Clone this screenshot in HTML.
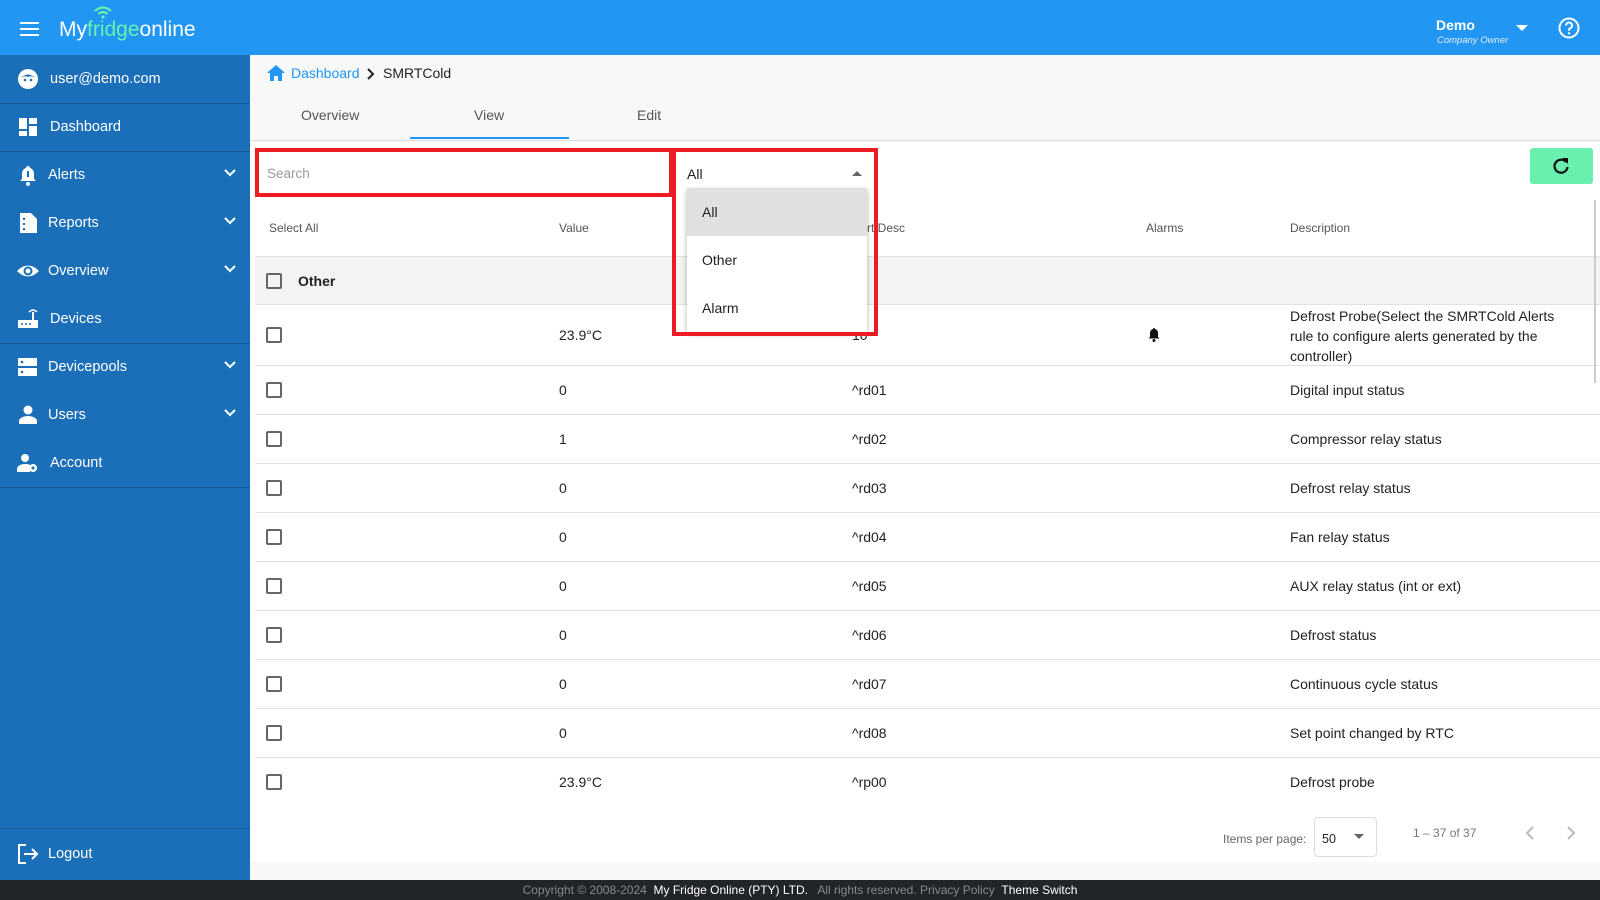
<!DOCTYPE html>
<html><head><meta charset="utf-8"><style>
*{box-sizing:border-box;margin:0;padding:0}
body{width:1600px;height:900px;overflow:hidden;font-family:"Liberation Sans",sans-serif;background:#f8f8f8;position:relative;color:#222}
.abs{position:absolute}
#top{left:0;top:0;width:1600px;height:55px;background:#2196f3;color:#fff}
#side{left:0;top:55px;width:250px;height:825px;background:#1a6fb8;color:#fff}
.si{position:absolute;left:0;width:250px;height:48px;font-size:14.5px;display:flex;align-items:center}
.si .ic{position:absolute;left:17px;top:13px;width:22px;height:22px}
.si .tx{position:absolute;left:48px}
.si .ch{position:absolute;left:224px;top:18px}
.line{position:absolute;left:0;width:250px;height:1px;background:#155e9e}
#foot{left:0;top:880px;width:1600px;height:20px;background:#212529;color:#888;font-size:12px;text-align:center;line-height:20px}
#foot b{color:#fff;font-weight:normal}
.card{left:250px;top:142px;width:1350px;height:720px;background:#fff}
.hd{font-size:12px;color:#555;top:221px}
.row{position:absolute;left:255px;width:1345px;border-bottom:1px solid #e2e2e2}
.cb{position:absolute;left:11px;width:16px;height:16px;border:2px solid #666;border-radius:2px}
.cell{position:absolute;font-size:14px;color:#222}
.dd{z-index:10}
</style></head><body>
<div id="top" class="abs">
 <svg class="abs" style="left:20px;top:22px" width="20" height="14"><rect y="0" width="19" height="2" fill="#fff"/><rect y="6" width="19" height="2" fill="#fff"/><rect y="12" width="19" height="2" fill="#fff"/></svg>
 <div class="abs" style="left:59px;top:18px;font-size:21px;color:#fff">My<span style="color:#69f0ae">fridge</span>online</div>
 <svg class="abs" style="left:92px;top:5px" width="22" height="14" viewBox="0 0 22 14"><path d="M3 6 Q11 -1 19 6" stroke="#69f0ae" stroke-width="2.2" fill="none"/><path d="M6.5 9 Q11 5 15.5 9" stroke="#69f0ae" stroke-width="2.2" fill="none"/><circle cx="11" cy="12" r="1.6" fill="#69f0ae"/></svg>
 <div class="abs" style="left:1436px;top:17px;font-size:14px;font-weight:bold">Demo</div>
 <div class="abs" style="left:1437px;top:35px;font-size:9.5px;font-style:italic;color:#e3f0fd">Company Owner</div>
 <svg class="abs" style="left:1516px;top:25px" width="12" height="7"><path d="M0 0H12L6 6Z" fill="#fff"/></svg>
 <svg class="abs" style="left:1558px;top:17px" width="22" height="22" viewBox="0 0 22 22"><circle cx="11" cy="11" r="9.5" stroke="#fff" stroke-width="2" fill="none"/><path d="M8 8.5a3 3 0 1 1 4.2 2.7c-.9.5-1.2 1-1.2 2v.6" stroke="#fff" stroke-width="2" fill="none"/><circle cx="11" cy="16.3" r="1.2" fill="#fff"/></svg>
</div>
<div id="side" class="abs">
 <div class="si" style="top:0"><svg class="ic" viewBox="0 0 22 22"><circle cx="11" cy="11" r="10" fill="#fff"/><path d="M4 10 Q11 3 18 10 Q14 7 11 9 Q8 7 4 10Z" fill="#1a6fb8"/><circle cx="8" cy="12" r="1.3" fill="#1a6fb8"/><circle cx="14" cy="12" r="1.3" fill="#1a6fb8"/></svg><span class="tx" style="left:50px">user@demo.com</span></div>
 <div class="line" style="top:48px"></div>
 <div class="si" style="top:48px"><svg class="ic" viewBox="0 0 22 22"><rect x="2" y="2" width="8" height="11" fill="#fff"/><rect x="12" y="2" width="8" height="6" fill="#fff"/><rect x="2" y="15" width="8" height="5" fill="#fff"/><rect x="12" y="10" width="8" height="10" fill="#fff"/></svg><span class="tx" style="left:50px">Dashboard</span></div>
 <div class="line" style="top:96px"></div>
 <div class="si" style="top:96px"><svg class="ic" viewBox="0 0 22 22"><path d="M11 2a2 2 0 0 1 2 2c3 1 4 3 4 7v4l2 2H3l2-2v-4c0-4 1-6 4-7a2 2 0 0 1 2-2z" fill="#fff"/><circle cx="11" cy="20" r="2" fill="#fff"/><rect x="10" y="7" width="2" height="6" fill="#1a6fb8"/></svg><span class="tx" style="left:48px">Alerts</span><svg class="ch" width="12" height="8"><path d="M1 1l5 5 5-5" stroke="#fff" stroke-width="2" fill="none"/></svg></div>
 <div class="si" style="top:144px"><svg class="ic" viewBox="0 0 22 22"><path d="M3 1h11l6 6v14H3z" fill="#fff"/><rect x="6" y="6" width="2" height="2" fill="#1a6fb8"/><rect x="6" y="11" width="2" height="2" fill="#1a6fb8"/><rect x="6" y="16" width="2" height="2" fill="#1a6fb8"/></svg><span class="tx">Reports</span><svg class="ch" width="12" height="8"><path d="M1 1l5 5 5-5" stroke="#fff" stroke-width="2" fill="none"/></svg></div>
 <div class="si" style="top:192px"><svg class="ic" viewBox="0 0 22 22"><path d="M0 11Q11 0 22 11Q11 22 0 11Z" fill="#fff"/><circle cx="11" cy="11" r="4.5" fill="#1a6fb8"/><circle cx="11" cy="11" r="2.5" fill="#fff"/></svg><span class="tx">Overview</span><svg class="ch" width="12" height="8"><path d="M1 1l5 5 5-5" stroke="#fff" stroke-width="2" fill="none"/></svg></div>
 <div class="si" style="top:240px"><svg class="ic" viewBox="0 0 22 22"><rect x="1" y="12" width="20" height="8" fill="#fff"/><rect x="15" y="4" width="2" height="8" fill="#fff"/><path d="M12 4Q16 0 20 4" stroke="#fff" stroke-width="1.5" fill="none"/><circle cx="5" cy="16" r="1" fill="#1a6fb8"/><circle cx="9" cy="16" r="1" fill="#1a6fb8"/><circle cx="13" cy="16" r="1" fill="#1a6fb8"/></svg><span class="tx" style="left:50px">Devices</span></div>
 <div class="line" style="top:288px"></div>
 <div class="si" style="top:288px"><svg class="ic" viewBox="0 0 22 22"><rect x="1" y="2" width="19" height="8" fill="#fff"/><rect x="1" y="12" width="19" height="8" fill="#fff"/><circle cx="5" cy="6" r="1.3" fill="#1a6fb8"/><circle cx="5" cy="16" r="1.3" fill="#1a6fb8"/></svg><span class="tx">Devicepools</span><svg class="ch" width="12" height="8"><path d="M1 1l5 5 5-5" stroke="#fff" stroke-width="2" fill="none"/></svg></div>
 <div class="si" style="top:336px"><svg class="ic" viewBox="0 0 22 22"><circle cx="11" cy="6" r="4.5" fill="#fff"/><path d="M2 20v-3c0-3 5-5 9-5s9 2 9 5v3z" fill="#fff"/></svg><span class="tx">Users</span><svg class="ch" width="12" height="8"><path d="M1 1l5 5 5-5" stroke="#fff" stroke-width="2" fill="none"/></svg></div>
 <div class="si" style="top:384px"><svg class="ic" viewBox="0 0 22 22"><circle cx="8" cy="6" r="4" fill="#fff"/><path d="M0 20v-3c0-3 4-5 8-5s5 1 5 1v7z" fill="#fff"/><circle cx="16" cy="16" r="4" fill="#fff"/><circle cx="16" cy="16" r="1.5" fill="#1a6fb8"/></svg><span class="tx" style="left:50px">Account</span></div>
 <div class="line" style="top:432px"></div>
 <div class="line" style="top:773px"></div>
 <div class="si" style="top:773px;height:52px"><svg class="ic" style="top:15px" viewBox="0 0 22 22"><path d="M9 2H2v18h7" stroke="#fff" stroke-width="2" fill="none"/><path d="M7 11h13M15 6l5 5-5 5" stroke="#fff" stroke-width="2" fill="none"/></svg><span class="tx">Logout</span></div>
</div>
<svg class="abs" style="left:266px;top:64px" width="20" height="18" viewBox="0 0 20 18"><path d="M10 1L1 9h3v8h4v-5h4v5h4V9h3z" fill="#2196f3"/></svg>
<div class="abs" style="left:291px;top:65px;font-size:14px;color:#2196f3">Dashboard</div>
<svg class="abs" style="left:367px;top:68px" width="8" height="12"><path d="M1 1l5 5-5 5" stroke="#222" stroke-width="2" fill="none"/></svg>
<div class="abs" style="left:383px;top:65px;font-size:14px;color:#222">SMRTCold</div>
<div class="abs" style="left:250px;top:140px;width:1350px;height:1px;background:#ddd"></div>
<div class="abs" style="left:301px;top:107px;font-size:14px;color:#555">Overview</div>
<div class="abs" style="left:474px;top:107px;font-size:14px;color:#555">View</div>
<div class="abs" style="left:637px;top:107px;font-size:14px;color:#555">Edit</div>
<div class="abs" style="left:410px;top:137px;width:159px;height:2px;background:#2196f3"></div>
<div class="card abs"></div>
<div class="abs" style="left:255px;top:148px;width:418px;height:49px;border:4px solid #ed1c24;background:#fff"></div>
<div class="abs" style="left:267px;top:166px;font-size:13.5px;color:#999">Search</div>
<div class="abs" style="left:687px;top:166px;font-size:14px;color:#222">All</div>
<svg class="abs" style="left:852px;top:171px" width="10" height="6"><path d="M0 5h10L5 0z" fill="#666"/></svg>
<div class="abs" style="left:1530px;top:148px;width:63px;height:36px;background:#69f0ae;border-radius:3px"></div>
<svg class="abs" style="left:1552px;top:157px" width="18" height="18" viewBox="0 0 18 18"><path d="M14 5A6.5 6.5 0 1 0 15.5 10" stroke="#111" stroke-width="2.2" fill="none"/><path d="M10 1h6v6z" fill="#111"/></svg>
<div class="abs hd" style="left:269px">Select All</div>
<div class="abs hd" style="left:559px">Value</div>
<div class="abs hd" style="left:867px">rt Desc</div>
<div class="abs hd" style="left:1146px">Alarms</div>
<div class="abs hd" style="left:1290px">Description</div>
<div class="row" style="top:256px;height:49px;background:#f3f3f3;border-top:1px solid #e2e2e2"><div class="cb" style="top:16px"></div><div class="cell" style="left:43px;top:16px;font-weight:bold">Other</div></div>
<div class="row" style="top:305px;height:61px"><div class="cb" style="top:22px"></div><div class="cell" style="left:304px;top:22px">23.9°C</div><div class="cell" style="left:597px;top:22px">10</div>
<svg class="abs" style="left:893px;top:23px" width="12" height="14" viewBox="0 0 12 14"><path d="M6 0a1 1 0 0 1 1 1c2 .5 3 2 3 4.5V9l1.5 1.5H.5L2 9V5.5C2 3 3 1.5 5 1a1 1 0 0 1 1-1z" fill="#111"/><circle cx="6" cy="12.5" r="1.5" fill="#111"/></svg>
<div class="cell" style="left:1035px;top:1px;line-height:20px;width:285px">Defrost Probe(Select the SMRTCold Alerts rule to configure alerts generated by the controller)</div></div>
<div class="row" style="top:366px;height:49px"><div class="cb" style="top:16px"></div><div class="cell" style="left:304px;top:16px">0</div><div class="cell" style="left:597px;top:16px">^rd01</div><div class="cell" style="left:1035px;top:16px">Digital input status</div></div>
<div class="row" style="top:415px;height:49px"><div class="cb" style="top:16px"></div><div class="cell" style="left:304px;top:16px">1</div><div class="cell" style="left:597px;top:16px">^rd02</div><div class="cell" style="left:1035px;top:16px">Compressor relay status</div></div>
<div class="row" style="top:464px;height:49px"><div class="cb" style="top:16px"></div><div class="cell" style="left:304px;top:16px">0</div><div class="cell" style="left:597px;top:16px">^rd03</div><div class="cell" style="left:1035px;top:16px">Defrost relay status</div></div>
<div class="row" style="top:513px;height:49px"><div class="cb" style="top:16px"></div><div class="cell" style="left:304px;top:16px">0</div><div class="cell" style="left:597px;top:16px">^rd04</div><div class="cell" style="left:1035px;top:16px">Fan relay status</div></div>
<div class="row" style="top:562px;height:49px"><div class="cb" style="top:16px"></div><div class="cell" style="left:304px;top:16px">0</div><div class="cell" style="left:597px;top:16px">^rd05</div><div class="cell" style="left:1035px;top:16px">AUX relay status (int or ext)</div></div>
<div class="row" style="top:611px;height:49px"><div class="cb" style="top:16px"></div><div class="cell" style="left:304px;top:16px">0</div><div class="cell" style="left:597px;top:16px">^rd06</div><div class="cell" style="left:1035px;top:16px">Defrost status</div></div>
<div class="row" style="top:660px;height:49px"><div class="cb" style="top:16px"></div><div class="cell" style="left:304px;top:16px">0</div><div class="cell" style="left:597px;top:16px">^rd07</div><div class="cell" style="left:1035px;top:16px">Continuous cycle status</div></div>
<div class="row" style="top:709px;height:49px"><div class="cb" style="top:16px"></div><div class="cell" style="left:304px;top:16px">0</div><div class="cell" style="left:597px;top:16px">^rd08</div><div class="cell" style="left:1035px;top:16px">Set point changed by RTC</div></div>
<div class="row" style="top:758px;height:49px;border:none"><div class="cb" style="top:16px"></div><div class="cell" style="left:304px;top:16px">23.9°C</div><div class="cell" style="left:597px;top:16px">^rp00</div><div class="cell" style="left:1035px;top:16px">Defrost probe</div></div>
<div class="abs" style="left:1594px;top:200px;width:2px;height:183px;background:#ccc"></div>
<!-- dropdown on top -->
<div class="abs dd" style="left:687px;top:188px;width:180px;height:144px;background:#fff;box-shadow:0 2px 5px rgba(0,0,0,.3)">
 <div style="height:48px;background:#e0e0e0;padding:16px 15px;font-size:14px">All</div>
 <div style="height:48px;padding:16px 15px;font-size:14px">Other</div>
 <div style="height:48px;padding:16px 15px;font-size:14px">Alarm</div>
</div>
<div class="abs dd" style="left:672px;top:148px;width:206px;height:188px;border:4px solid #ed1c24;z-index:11"></div>
<div class="abs" style="left:1223px;top:832px;font-size:12px;color:#666">Items per page:</div>
<div class="abs" style="left:1314px;top:817px;width:63px;height:40px;border:1px solid #ddd;border-radius:4px"></div>
<div class="abs" style="left:1322px;top:832px;font-size:12.5px;color:#222">50</div>
<svg class="abs" style="left:1354px;top:834px" width="10" height="5"><path d="M0 0h10L5 5z" fill="#666"/></svg>
<div class="abs" style="left:1413px;top:826px;font-size:12px;color:#777">1 – 37 of 37</div>
<svg class="abs" style="left:1525px;top:826px" width="10" height="14"><path d="M8 1L2 7l6 6" stroke="#bbb" stroke-width="2" fill="none"/></svg>
<svg class="abs" style="left:1566px;top:826px" width="10" height="14"><path d="M2 1l6 6-6 6" stroke="#bbb" stroke-width="2" fill="none"/></svg>
<div id="foot" class="abs">Copyright © 2008-2024 &nbsp;<b>My Fridge Online (PTY) LTD.</b> &nbsp; All rights reserved. Privacy Policy &nbsp;<b>Theme Switch</b></div>
</body></html>
